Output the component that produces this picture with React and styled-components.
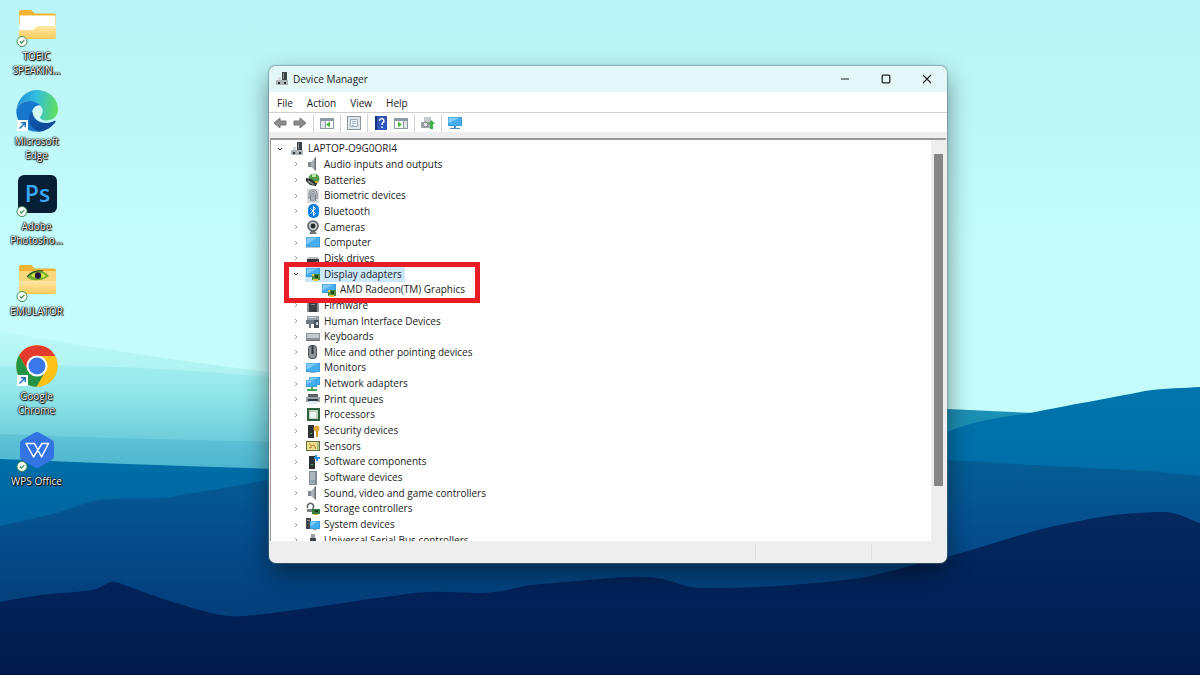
import React from 'react';
import styled, { createGlobalStyle } from 'styled-components';

const GlobalStyle = createGlobalStyle`
  * {
    box-sizing: border-box;
  }
  body {
    margin: 0;
    font-family: 'Open Sans', 'Noto Sans', sans-serif;
    font-size: 10px;
    color: #222;
  }
  button {
    font: inherit;
    color: inherit;
    background: none;
    border: 0;
    padding: 0;
  }
`;

/* ---------- wallpaper ---------- */

const Wallpaper = () => (
  <Backdrop viewBox="0 0 1200 675" preserveAspectRatio="none" aria-hidden="true">
    <defs>
      <linearGradient id="sky" x1="0" y1="0" x2="0" y2="1">
        <stop offset="0" stopColor="#baf4f6" />
        <stop offset="0.4" stopColor="#c3fcfb" />
        <stop offset="1" stopColor="#c3fcfb" />
      </linearGradient>
      <linearGradient id="haze" gradientUnits="userSpaceOnUse" x1="0" y1="330" x2="0" y2="470">
        <stop offset="0" stopColor="#b4f8f6" />
        <stop offset="0.45" stopColor="#92e6e8" />
        <stop offset="1" stopColor="#55bcd2" />
      </linearGradient>
      <linearGradient id="sea" gradientUnits="userSpaceOnUse" x1="0" y1="387" x2="0" y2="520">
        <stop offset="0" stopColor="#0074ac" />
        <stop offset="0.5" stopColor="#0070a9" />
        <stop offset="1" stopColor="#0065a0" />
      </linearGradient>
      <linearGradient id="mid" gradientUnits="userSpaceOnUse" x1="0" y1="460" x2="0" y2="600">
        <stop offset="0" stopColor="#045e94" />
        <stop offset="0.45" stopColor="#065090" />
        <stop offset="1" stopColor="#03407c" />
      </linearGradient>
      <linearGradient id="navy" gradientUnits="userSpaceOnUse" x1="0" y1="512" x2="0" y2="675">
        <stop offset="0" stopColor="#04295f" />
        <stop offset="0.5" stopColor="#022259" />
        <stop offset="1" stopColor="#01194a" />
      </linearGradient>
    </defs>
    <path fill="url(#sky)" d="M0 0H1200V675H0z" />
    <path fill="url(#haze)" d="M0 332C60 342 180 362 280 373V480H0z" />
    <path fill="#d2fffc" opacity="0.35" d="M0 332C60 342 180 362 280 371V378C170 368 80 364 0 366z" />
    <path fill="#3aa5c8" opacity="0.3" d="M0 434C90 438 190 440 280 442V480H0z" />
    <path fill="#1c8fb4" d="M900 407L947 409L1035 413L940 440H900z" />
    <path
      fill="url(#sea)"
      d="M0 459C90 463 180 466 280 469L900 446L947 432C970 422 1000 417 1030 413C1070 405 1110 398 1145 391C1165 388 1185 388 1200 387V675H0z"
    />
    <path
      fill="url(#mid)"
      d="M0 526C20 521 40 518 60 512C80 506 92 499 112 499C130 498 150 499 165 498C200 492 240 485 280 478L700 450L947 460L1070 467L1150 471L1200 476V675H0z"
    />
    <path
      fill="url(#navy)"
      d="M0 602C20 598 40 595 50 594C70 592 85 592 96 589C104 586 108 582 113 581.500C125 584 150 596 200 610C220 616 232 617 245 616C290 612 350 601 400 595C430 590 450 592 475 593C500 593 515 588 530 585C560 583 600 578 630 577C670 575 680 588 700 588C750 588 800 586 860 578C900 570 920 562 947 557C990 545 1040 527 1080 521C1110 514 1140 512 1165 512C1180 513 1188 519 1200 523V675H0z"
    />
  </Backdrop>
);

/* ---------- desktop icons ---------- */

const SyncedBadge = () => (
  <g>
    <circle cx="6" cy="36.500" r="5" fill="#fff" stroke="#3c8f4c" strokeWidth="1" />
    <path d="M3.800 36.500l1.600 1.600 3-3.200" fill="none" stroke="#3c8f4c" strokeWidth="1.200" />
  </g>
);

const ShortcutBadge = () => (
  <g>
    <path fill="#fff" d="M1 30h11v11H1z" />
    <path d="M3.500 38.500l5.500-5.500M4.800 32.800h4.500v4.500" fill="none" stroke="#1f72c4" strokeWidth="1.500" />
  </g>
);

const Folder = ({ paper, children }) => (
  <>
    <defs>
      <linearGradient id="folderFront" x1="0" y1="0" x2="0" y2="1">
        <stop offset="0" stopColor="#ffe9a8" />
        <stop offset="1" stopColor="#f7ca5a" />
      </linearGradient>
    </defs>
    <path fill="#efb532" d="M3 7q0-2 2-2h10l4 3.500h19q2 0 2 2V20H3z" />
    {paper ? <path fill="#fff" d="M3.500 10.500h36V27h-36z" /> : <path fill="#f9d77c" d="M3 11h37v12H3z" />}
    {children}
    <path fill="url(#folderFront)" d={paper ? 'M3 25h14l4-4h19v11q0 2-2 2H5q-2 0-2-2z' : 'M3 21h37v11q0 2-2 2H5q-2 0-2-2z'} />
  </>
);

const glyphs = {
  folder: <Folder paper />,
  emulator: (
    <Folder>
      <path fill="#6fae2c" d="M11 17C16 9 27 9 33 16C27 21 16 22 11 17z" />
      <path fill="#d9e64a" d="M15 15.500C19 11 27 12 30 16C25 19 19 19 15 15.500z" />
      <circle cx="22" cy="15.500" r="3.200" fill="#24173f" />
      <path d="M11 17C15 12 20 10 27 11" fill="none" stroke="#1c4a1c" strokeWidth="1.200" />
    </Folder>
  ),
  edge: (
    <>
      <defs>
        <linearGradient id="edgeTop" x1="0" y1="0.400" x2="1" y2="0.500">
          <stop offset="0" stopColor="#1c8fd8" />
          <stop offset="0.450" stopColor="#32bde0" />
          <stop offset="1" stopColor="#62df5c" />
        </linearGradient>
        <linearGradient id="edgeLow" x1="0" y1="0" x2="1" y2="1">
          <stop offset="0" stopColor="#1260b4" />
          <stop offset="1" stopColor="#0c3f8f" />
        </linearGradient>
      </defs>
      <path
        fill="url(#edgeTop)"
        d="M0.500 19C2 8 11 0 21 0C33 0 42 9 42 19C42 27 36 30.500 30.500 30.500C26 30.500 23.500 28.500 24 27C26 25 26.500 23 26.500 21C26 15 20 11 14 11C7 11 2 14.500 0.500 19z"
      />
      <path
        fill="#1777cc"
        d="M0.300 20C2 14 8 11 14 11C18 11 22 12.500 24.500 15.500C20 14.500 15.500 19 15.500 25C15.500 33 22 39 29 40C25 42 20 42 16 41.300C6 38.500 0 30 0.300 20z"
      />
      <path
        fill="url(#edgeLow)"
        d="M15.500 21C10 28 13 39 24 41.500C30 41 36 37 39.500 32C40 30.500 39 30.500 38 31C29 35.500 18 32.500 16.500 22z"
      />
      <path fill="#d4f8f6" d="M17 21C18 15 25 14.500 26.500 19.500C27.300 23 24 25.500 24 27.200C24 29 26 30.500 30 31C22 32.500 16 27 17 21z" />
    </>
  ),
  photoshop: (
    <>
      <rect x="2" y="0" width="39" height="38" rx="6" fill="#071f35" />
      <text x="21.500" y="27" textAnchor="middle" fontFamily="Open Sans, sans-serif" fontWeight="600" fontSize="23" fill="#38a7f8">
        Ps
      </text>
    </>
  ),
  chrome: (
    <>
      <circle cx="21" cy="21" r="20.800" fill="#fbc116" />
      <path fill="#e33b2e" d="M21 0.200A20.800 20.800 0 0 1 39.300 11H21A10 10 0 0 0 12.300 26L3 10.600A20.800 20.800 0 0 1 21 0.200z" />
      <path fill="#239444" d="M3 10.600L12.300 26A10 10 0 0 0 29.600 26L20.500 41.800A20.800 20.800 0 0 1 3 10.600z" />
      <circle cx="21" cy="21" r="10.500" fill="#fff" />
      <circle cx="21" cy="21" r="8.500" fill="#3878ea" />
    </>
  ),
  wps: (
    <>
      <path fill="#3374e4" d="M19 2.600q2-1.200 4 0l13 7.400q2 1 2 3.200v13.600q0 2.200-2 3.200l-13 7.400q-2 1.200-4 0l-13-7.400q-2-1-2-3.200V13.200q0-2.200 2-3.200z" />
      <path d="M10 13.500h8.500l7 13.500 7-13.500H26L17.500 27z" fill="none" stroke="#fff" strokeWidth="1.500" strokeLinejoin="round" />
    </>
  ),
};

const desktopItems = [
  { label: ['TOEIC', 'SPEAKIN...'], glyph: 'folder', synced: true },
  { label: ['Microsoft', 'Edge'], glyph: 'edge' },
  { label: ['Adobe', 'Photosho...'], glyph: 'photoshop', synced: true },
  { label: ['EMULATOR'], glyph: 'emulator', synced: true },
  { label: ['Google', 'Chrome'], glyph: 'chrome' },
  { label: ['WPS Office'], glyph: 'wps', synced: true },
];

/* ---------- small icons ---------- */

const Tower = () => (
  <>
    <path fill="#3d4247" d="M7 0h5v9H7z" />
    <path fill="#8b9298" d="M8 1h1v6H8z" />
    <path fill="#aeb4b8" d="M1 8h12v5H1z" />
    <path fill="#2b2f33" d="M3 10h2v2H3zM9 10h2v2H9z" />
    <path fill="#d8dcdf" d="M3 5h3v3H3z" />
  </>
);

const Screen = ({ x = 0, y = 1, w = 14, h = 9 }) => (
  <>
    <rect x={x} y={y} width={w} height={h} fill="#2f8ccf" />
    <rect x={x + 0.5} y={y + 0.5} width={w - 1} height={h - 1} fill="#45aeee" />
    <path fill="#7fcaf7" d={`M${x + 0.5} ${y + 0.5}h${w - 3}l-${w - 3} ${h - 3}z`} />
  </>
);

const Speaker = () => (
  <>
    <path fill="#858b90" d="M2 5h3v5H2z" />
    <path fill="#aab0b5" d="M5 5l5-5v14l-5-4z" />
    <path fill="#6a7075" d="M8.500 1.500L10 0v14l-1.500-1.500z" />
  </>
);

const Adapter = () => (
  <>
    <Screen x={0} y={1} w={14} h={9} />
    <path fill="#4d8a3f" d="M6 7h8v6H6z" />
    <path fill="#e4c23a" d="M7 12h5v2H7zM6 7h2v2H6z" />
    <path fill="#1d4a24" d="M9 8h3v3H9z" />
  </>
);

const smallIcons = {
  tower: <Tower />,
  speaker: <Speaker />,
  battery: (
    <>
      <circle cx="8" cy="6" r="5.500" fill="#4f9b4a" />
      <path fill="#bfe3a9" d="M6 1h4v3H6z" />
      <path fill="#2e3530" d="M0 5l5 1 6 4-1 3-6-1-4-4z" />
      <path fill="#8f9a94" d="M2 7l6 4-1 1-5-3z" />
      <path fill="#d0a93c" d="M9 8h3v2H9z" />
    </>
  ),
  fingerprint: (
    <>
      <rect x="1" y="0" width="12" height="14" fill="#d9dde0" />
      <path d="M4.500 12V5.500a2.500 3 0 0 1 5 0V12M6 12.500V5.800a1 1.500 0 0 1 2 0V12.500M3 10V5a4 4.200 0 0 1 8 0v5" fill="none" stroke="#787f85" />
    </>
  ),
  bluetooth: (
    <>
      <rect x="2" y="0" width="11" height="14" rx="5" fill="#0d7ee4" />
      <path d="M4.500 4.500l5 5L7.500 11.500v-9l2 2-5 5" fill="none" stroke="#fff" />
    </>
  ),
  camera: (
    <>
      <path fill="#777" d="M5 11h4l2 3H3z" />
      <circle cx="7" cy="6" r="5.800" fill="#5d6265" />
      <circle cx="7" cy="6" r="4.200" fill="#c5cacd" />
      <circle cx="7" cy="6" r="2.400" fill="#25292c" />
    </>
  ),
  computer: (
    <>
      <Screen x={0} y={1} w={14} h={10} />
      <path fill="#b9c6cf" d="M0 11h14v1H0z" />
    </>
  ),
  disk: (
    <>
      <path fill="#b8bcbf" d="M2 6h10l1 2H1z" />
      <path fill="#33373a" d="M1 8h12v5H1z" />
      <path fill="#6c8a6c" d="M10 10h2v1h-2z" />
    </>
  ),
  adapter: <Adapter />,
  firmware: (
    <>
      <path fill="#8a8f93" d="M1 3h12v11H1z" />
      <path fill="#3a3f43" d="M3 1h8v13H3z" />
      <path fill="#8a8f93" d="M5 4h4v1H5zM5 6h4v1H5z" />
    </>
  ),
  hid: (
    <>
      <path fill="#9aa0a5" d="M1 2h12v5H1z" />
      <path fill="#6c7a85" d="M0 6h8v4H5v4H3v-4H0z" />
      <path fill="#4a5157" d="M8 6h5v8H8z" />
      <path fill="#c8d5de" d="M10 8h2v3h-2zM2 3h8v1H2z" />
    </>
  ),
  keyboard: (
    <>
      <path fill="#8b9195" d="M0 3h14v8H0z" />
      <path fill="#c6cacd" d="M1 4h12v4H1z" />
      <path fill="#6f7579" d="M0 10h14v1H0z" />
    </>
  ),
  mouse: (
    <>
      <rect x="2" y="0" width="9" height="14" rx="4" fill="#4c5359" />
      <rect x="3" y="1" width="7" height="12" rx="3" fill="#8c949a" />
      <path fill="#2f3539" d="M5.500 1h2v8h-2z" />
    </>
  ),
  monitor: (
    <>
      <Screen x={0} y={2} w={14} h={9} />
      <path fill="#8fb3c9" d="M4 11h6v1H4z" />
    </>
  ),
  network: (
    <>
      <Screen x={3} y={0} w={11} h={8} />
      <Screen x={0} y={3} w={11} h={7} />
      <path fill="#46a54c" d="M5 10h2v2h4v2H1v-2h4z" />
    </>
  ),
  printer: (
    <>
      <path fill="#5c6267" d="M2 2h10v3H2z" />
      <path fill="#9aa1a6" d="M0 5h14v5H0z" />
      <path fill="#34393d" d="M2 7h10v2H2z" />
      <path fill="#dfe9f1" d="M3 9h8v3H3z" />
    </>
  ),
  cpu: (
    <>
      <path fill="#2f6240" d="M1 0h13v13H1z" />
      <path fill="#b9d0bd" d="M3 2h9v9H3z" />
      <path fill="#f0f3f0" d="M4 4h6v6H4z" />
    </>
  ),
  security: (
    <>
      <path fill="#2d3134" d="M2 1h6v13H2z" />
      <path fill="#53a84f" d="M4 9h2v1H4z" />
      <circle cx="10.500" cy="4.500" r="3" fill="#e5ab3c" />
      <path fill="#d99a2c" d="M10 6h2v7h-2z" />
    </>
  ),
  sensor: (
    <>
      <path fill="#6b6a3c" d="M0 2h14v10H0z" />
      <path fill="#e9e08a" d="M1 3h10v8H1z" />
      <path d="M3 4l2 3 3-1 2 4M3 9l3-1" fill="none" stroke="#b6783a" />
      <path fill="#a9c78a" d="M11 3h2v8h-2z" />
    </>
  ),
  component: (
    <>
      <path fill="#2d3134" d="M3 1h6v13H3z" />
      <path fill="#53a84f" d="M5 9h2v1H5z" />
      <path fill="#2f8fe0" d="M9 0h2v2h3v2h-2v2h-2V4H8V2h1z" />
    </>
  ),
  software: (
    <>
      <path fill="#7f8b93" d="M3 0h8v14H3z" />
      <path fill="#a9b6bd" d="M4 1h5v12H4z" />
      <path fill="#8aa3a4" d="M5 9h4v3H5z" />
    </>
  ),
  storage: (
    <>
      <path d="M2 6a3 3 0 1 1 5 0l1 2" fill="none" stroke="#60676c" strokeWidth="1.500" />
      <path fill="#7b8287" d="M1 7h8v3H1z" />
      <path fill="#2f7a3c" d="M6 7h8v5H6z" />
      <path fill="#183f20" d="M9 8h3v2H9z" />
      <path fill="#d9bb3a" d="M7 12h5v1H7z" />
    </>
  ),
  system: (
    <>
      <path fill="#41474c" d="M0 0h5v11H0z" />
      <path fill="#8c959b" d="M1 2h3v1H1z" />
      <Screen x={4} y={3} w={10} h={8} />
      <path fill="#9aa6ad" d="M7 11h4v1H7z" />
    </>
  ),
  usb: (
    <>
      <path fill="#9aa0a4" d="M5 1h4v4H5z" />
      <path fill="#3d4246" d="M4 5h6v9H4z" />
    </>
  ),
};

const toolIcons = {
  back: <path fill="#8c8c8c" stroke="#757575" d="M1 7l6-5v3h6v4H7v3z" />,
  forward: <path fill="#8c8c8c" stroke="#757575" d="M13 7L7 2v3H1v4h6v3z" />,
  tree: (
    <>
      <path fill="#8d99a3" d="M0 2h14v11H0z" />
      <path fill="#dfe4e8" d="M1 5h4v7H1z" />
      <path fill="#fff" d="M6 5h7v7H6z" />
      <path fill="#4cb648" d="M6 8.500L10 5.500v6z" />
    </>
  ),
  properties: (
    <>
      <rect x="0.500" y="0.500" width="13" height="13" fill="#dfe5e9" stroke="#8d979e" />
      <path fill="#eef2f4" stroke="#9fb0bb" d="M3.500 3.500h7v7h-7z" />
      <path d="M5 5.500h4M5 7.500h4M5 9.500h2" stroke="#9db9cb" />
    </>
  ),
  help: (
    <>
      <path fill="#2f55b8" d="M1 0h12v14H1z" />
      <path fill="#16307c" d="M1 0h2v14H1z" />
      <path d="M5.500 5a2.200 2.200 0 1 1 3.500 1.500C8 7.500 8 7.500 8 9M8 10.500v1.500" fill="none" stroke="#fff" strokeWidth="1.500" />
    </>
  ),
  details: (
    <>
      <path fill="#8d99a3" d="M0 2h14v11H0z" />
      <path fill="#fff" d="M1 5h8v7H1z" />
      <path fill="#dfe4e8" d="M10 5h3v7h-3z" />
      <path fill="#4cb648" d="M8 8.500L4 5.500v6z" />
    </>
  ),
  scan: (
    <>
      <path fill="#c4c9cc" d="M3 1h7v6H3z" />
      <path fill="#a3a9ad" d="M0 6h11v6H0z" />
      <circle cx="4.500" cy="8.500" r="2.500" fill="#e3e6e8" stroke="#777d81" />
      <path fill="#3eb049" d="M10.500 4l3.500 4h-2v5H9V8H7z" />
    </>
  ),
  remote: (
    <>
      <Screen x={0} y={1} w={14} h={9} />
      <path fill="#4a90c4" d="M6 10h2v2h4v1H2v-1h4z" />
    </>
  ),
};

/* ---------- window data ---------- */

const menus = ['File', 'Action', 'View', 'Help'];

const toolGroups = [
  [['Back', 'back'], ['Forward', 'forward']],
  [['Show console tree', 'tree']],
  [['Properties', 'properties']],
  [['Help topics', 'help'], ['Show details', 'details']],
  [['Scan for hardware changes', 'scan']],
  [['Remote computer', 'remote']],
];

const nodes = [
  { label: 'LAPTOP-O9G0ORI4', icon: 'tower', level: 0, open: true },
  { label: 'Audio inputs and outputs', icon: 'speaker' },
  { label: 'Batteries', icon: 'battery' },
  { label: 'Biometric devices', icon: 'fingerprint' },
  { label: 'Bluetooth', icon: 'bluetooth' },
  { label: 'Cameras', icon: 'camera' },
  { label: 'Computer', icon: 'computer' },
  { label: 'Disk drives', icon: 'disk' },
  { label: 'Display adapters', icon: 'adapter', open: true, selected: true, marked: true },
  { label: 'AMD Radeon(TM) Graphics', icon: 'adapter', level: 2, leaf: true },
  { label: 'Firmware', icon: 'firmware' },
  { label: 'Human Interface Devices', icon: 'hid' },
  { label: 'Keyboards', icon: 'keyboard' },
  { label: 'Mice and other pointing devices', icon: 'mouse' },
  { label: 'Monitors', icon: 'monitor' },
  { label: 'Network adapters', icon: 'network' },
  { label: 'Print queues', icon: 'printer' },
  { label: 'Processors', icon: 'cpu' },
  { label: 'Security devices', icon: 'security' },
  { label: 'Sensors', icon: 'sensor' },
  { label: 'Software components', icon: 'component' },
  { label: 'Software devices', icon: 'software' },
  { label: 'Sound, video and game controllers', icon: 'speaker' },
  { label: 'Storage controllers', icon: 'storage' },
  { label: 'System devices', icon: 'system' },
  { label: 'Universal Serial Bus controllers', icon: 'usb' },
];

const TreeNode = ({ label, icon, level = 1, open, leaf, selected, marked }) => (
  <TreeRow role="treeitem" $level={level} aria-selected={!!selected}>
    {leaf ? (
      <ChevronSpace />
    ) : (
      <Chevron type="button" aria-label={open ? 'Collapse' : 'Expand'} $open={open}>
        <svg width="8" height="8" viewBox="0 0 8 8">
          <path d={open ? 'M2 3L4 5 6 3' : 'M3 2L5 4 3 6'} fill="none" stroke="currentColor" />
        </svg>
      </Chevron>
    )}
    <NodeLabel $selected={selected}>
      <SmallIcon viewBox="0 0 14 14">{smallIcons[icon]}</SmallIcon>
      {label}
    </NodeLabel>
    {marked && <Highlight />}
  </TreeRow>
);

const DeviceManager = () => (
  <Window>
    <TitleBar>
      <SmallIcon viewBox="0 0 14 14">{smallIcons.tower}</SmallIcon>
      <Title>Device Manager</Title>
      <Control type="button" aria-label="Minimize">
        <svg width="10" height="10" viewBox="0 0 10 10">
          <path d="M1 5h8" stroke="#222" />
        </svg>
      </Control>
      <Control type="button" aria-label="Maximize">
        <svg width="10" height="10" viewBox="0 0 10 10">
          <rect x="1.200" y="1.200" width="7.600" height="7.600" rx="1" fill="none" stroke="#222" strokeWidth="1.300" />
        </svg>
      </Control>
      <Control type="button" aria-label="Close">
        <svg width="10" height="10" viewBox="0 0 10 10">
          <path d="M1 1l8 8M9 1L1 9" stroke="#222" strokeWidth="1.100" />
        </svg>
      </Control>
    </TitleBar>
    <MenuBar>
      {menus.map((menu) => (
        <MenuButton type="button" key={menu}>
          {menu}
        </MenuButton>
      ))}
    </MenuBar>
    <ToolBar>
      {toolGroups.map((group) => (
        <ToolGroup key={group[0][1]}>
          {group.map(([name, icon]) => (
            <ToolButton type="button" aria-label={name} key={icon}>
              <SmallIcon viewBox="0 0 14 14">{toolIcons[icon]}</SmallIcon>
            </ToolButton>
          ))}
        </ToolGroup>
      ))}
    </ToolBar>
    <Content>
      <TreePane>
        <Tree role="tree" aria-label="Devices">
          {nodes.map((node) => (
            <TreeNode key={node.label} {...node} />
          ))}
        </Tree>
      </TreePane>
      <ScrollTrack>
        <ScrollThumb />
      </ScrollTrack>
    </Content>
    <StatusBar>
      <StatusCell />
      <StatusCell $width="116px" />
      <StatusCell $width="76px" />
    </StatusBar>
  </Window>
);

const App = () => {
  return (
    <Desktop>
      <GlobalStyle />
      <Wallpaper />
      <IconColumn>
        {desktopItems.map(({ label, glyph, synced }) => (
          <DesktopIcon type="button" key={glyph}>
            <Glyph viewBox="0 0 42 42">
              {glyphs[glyph]}
              {synced ? <SyncedBadge /> : <ShortcutBadge />}
            </Glyph>
            {label.map((line) => (
              <IconLabel key={line}>{line}</IconLabel>
            ))}
          </DesktopIcon>
        ))}
      </IconColumn>
      <DeviceManager />
    </Desktop>
  );
};

export default App;

const Desktop = styled.main`
  position: relative;
  min-height: 100vh;
  overflow: hidden;
`;

const Backdrop = styled.svg`
  position: absolute;
  width: 100%;
  height: 100%;
`;

const IconColumn = styled.nav`
  position: relative;
  display: grid;
  grid-auto-rows: 85px;
  width: 73px;
  padding-top: 5px;
`;

const DesktopIcon = styled.button`
  display: flex;
  flex-direction: column;
  align-items: center;
`;

const Glyph = styled.svg`
  width: 42px;
  height: 42px;
  margin-bottom: 2px;
  overflow: visible;
`;

const IconLabel = styled.span`
  line-height: 14px;
  color: #fff;
  white-space: nowrap;
  text-shadow: 0 0 1px #000, 0 0 1px #000, 0 0 2px #000, 1px 1px 1px #000;
`;

const Window = styled.section`
  position: absolute;
  inset: 66px 253px 112px 269px;
  display: flex;
  flex-direction: column;
  background: #eee;
  border-radius: 7px;
  overflow: hidden;
  box-shadow: 0 0 1px 1px rgba(90, 120, 130, 0.5), 0 10px 26px rgba(0, 0, 0, 0.45);
`;

const TitleBar = styled.header`
  display: flex;
  align-items: center;
  height: 26px;
  padding-left: 6px;
  background: #e4f8fa;
`;

const Title = styled.div`
  flex: 1;
  padding-left: 4px;
`;

const Control = styled.button`
  display: flex;
  align-items: center;
  justify-content: center;
  width: 41px;
  height: 26px;
`;

const MenuBar = styled.nav`
  display: flex;
  align-items: center;
  gap: 14px;
  height: 21px;
  padding: 2px 0 0 8px;
  background: #fff;
  border-bottom: 1px solid #cfcfcf;
`;

const MenuButton = styled.button`
  line-height: 18px;
`;

const ToolBar = styled.div`
  display: flex;
  align-items: center;
  height: 25px;
  padding-left: 4px;
  background: #fff;
  border-bottom: 6px solid #eee;
`;

const ToolGroup = styled.div`
  display: flex;
  gap: 6px;
  margin-right: 6px;
  padding-right: 6px;
  border-right: 1px solid #d4d4d4;

  &:last-child {
    border-right: 0;
  }
`;

const ToolButton = styled.button`
  display: flex;
  padding: 2px 0;
`;

const SmallIcon = styled.svg`
  width: 14px;
  height: 14px;
  flex: none;
`;

const Content = styled.div`
  flex: 1;
  display: flex;
  min-height: 0;
  margin: 0 1px;
  background: #fff;
  border-top: 2px solid #999;
  border-left: 1px solid #999;
`;

const TreePane = styled.div`
  flex: 1;
  overflow: hidden;
`;

const Tree = styled.ul`
  display: grid;
  grid-template-rows: repeat(26, 1fr);
  height: 408px;
  margin: 0;
  padding: 1px 0 0;
  list-style: none;
`;

const TreeRow = styled.li`
  position: relative;
  display: flex;
  align-items: center;
  padding-left: ${({ $level }) => 3 + $level * 16}px;
`;

const ChevronSpace = styled.span`
  width: 12px;
`;

const Chevron = styled.button`
  display: flex;
  justify-content: center;
  width: 12px;
  color: ${({ $open }) => ($open ? '#333' : '#a0a0a0')};
`;

const NodeLabel = styled.span`
  display: flex;
  align-items: center;
  gap: 4px;
  margin-left: 3px;
  padding: 0 3px 0 1px;
  line-height: 15px;
  white-space: nowrap;
  background: ${({ $selected }) => ($selected ? '#cce8ff' : 'none')};
`;

const Highlight = styled.span`
  position: absolute;
  z-index: 1;
  top: -4px;
  left: 13px;
  width: 196px;
  height: 41px;
  border: 5px solid #e81c24;
`;

const ScrollTrack = styled.div`
  width: 15px;
  padding: 14px 3px 55px;
  background: #eee;
`;

const ScrollThumb = styled.div`
  height: 100%;
  background: #868686;
`;

const StatusBar = styled.footer`
  display: flex;
  height: 22px;
  padding: 3px 0;
`;

const StatusCell = styled.div`
  flex: ${({ $width }) => ($width ? `0 0 ${$width}` : '1')};

  & + & {
    border-left: 1px solid #e0e0e0;
  }
`;
